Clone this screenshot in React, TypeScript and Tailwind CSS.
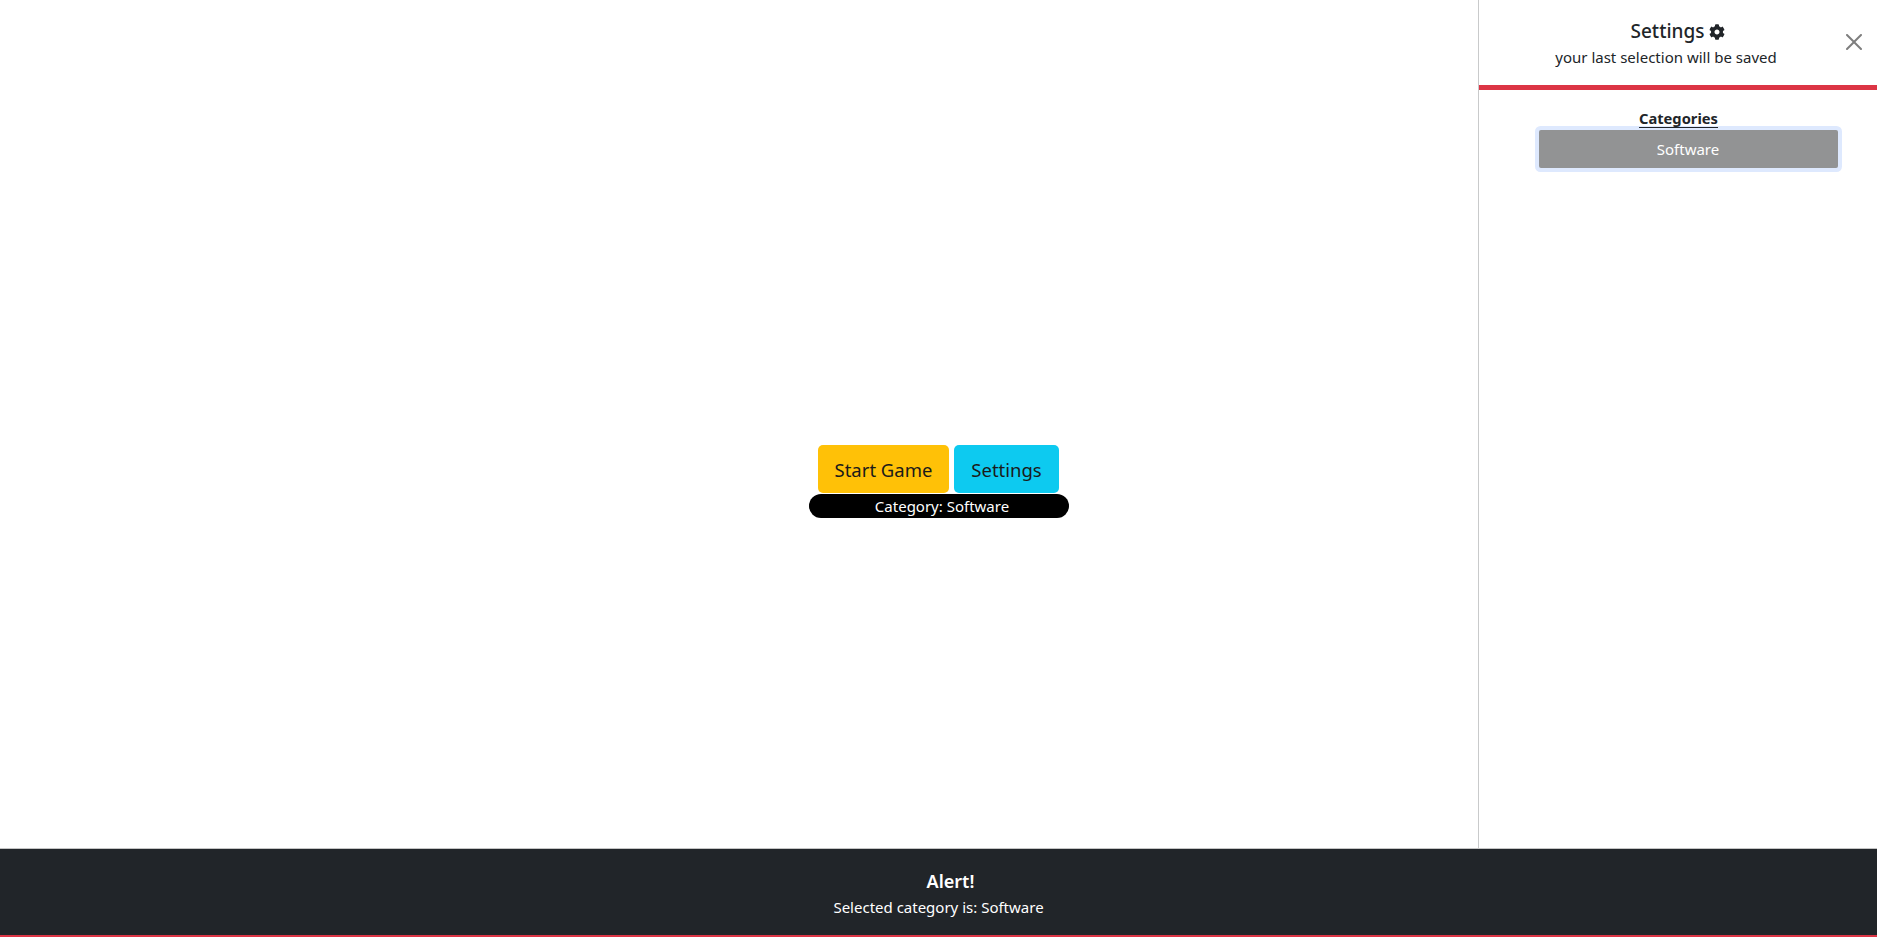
import { FaCog } from "react-icons/fa";

const FONT = "font-['Noto_Sans','Open_Sans',sans-serif]";

function SettingsPanel() {
  return (
    <aside className="absolute top-0 right-0 w-[399px] h-[849px] bg-white border-l border-[#c9cacb] flex flex-col text-[#212529]">
      <div className="relative h-[85px] shrink-0 w-[374px] flex flex-col items-center pt-[18px]">
        <div className="flex items-center gap-[5px] pl-[24px] h-[27px] text-[19px] leading-[27px] font-medium">
          <span>Settings</span>
          <FaCog size={16} />
        </div>
        <p className="mt-[1px] text-[15px] leading-[22px]">your last selection will be saved</p>
      </div>
      <button className="absolute top-[34px] right-[15px] w-4 h-4 opacity-50" aria-label="Close">
        <svg viewBox="0 0 16 16" className="w-4 h-4" fill="#000">
          <path d="M.293.293a1 1 0 011.414 0L8 6.586 14.293.293a1 1 0 111.414 1.414L9.414 8l6.293 6.293a1 1 0 01-1.414 1.414L8 9.414l-6.293 6.293a1 1 0 01-1.414-1.414L6.586 8 .293 1.707a1 1 0 010-1.414z" />
        </svg>
      </button>
      <div className="h-[5px] shrink-0 bg-[#dc3545]" />
      <div className="flex flex-col pt-[19px]">
        <div className="relative z-10 self-start ml-[160px] text-[14.7px] leading-[20px] font-bold border-b border-[#212529] h-[19px] flex items-center">
          Categories
        </div>
        <div className="ml-[60px] mt-[2px] w-[299px] h-[38px] pr-[1px] flex items-center justify-center rounded-[2px] bg-[#929394] shadow-[0_0_0_4px_#dee9fe] text-white text-[15px]">
          Software
        </div>
      </div>
    </aside>
  );
}

export default function App() {
  return (
    <div className={`relative h-[937px] flex flex-col overflow-hidden bg-white ${FONT}`}>
      <main className="flex-1 flex flex-col items-center pt-[445px]">
        <div className="flex gap-[5px]">
          <button className="w-[131px] h-[48px] rounded-[5px] bg-[#ffc107] text-[#1a1a1a] text-[18.5px] pt-[1px]">Start Game</button>
          <button className="w-[105px] h-[48px] rounded-[5px] bg-[#0dcaf0] text-[#1a1a1a] text-[18.5px] pt-[1px]">Settings</button>
        </div>
        <div className="mt-[1px] w-[260px] h-[24px] pl-[7px] rounded-full bg-black text-white text-[15px] leading-[24px] text-center">
          Category: Software
        </div>
      </main>
      <SettingsPanel />
      <footer className="relative h-[89px] shrink-0 bg-[#212529] border-t border-[#c4c4c4] border-b-2 border-b-[#dc3545] text-white text-center pt-[19px]">
        <div className="text-[18px] leading-[27px] font-semibold pl-[24px]">Alert!</div>
        <div className="text-[15px] leading-[22px] mt-[1px]">Selected category is: Software</div>
      </footer>
    </div>
  );
}
